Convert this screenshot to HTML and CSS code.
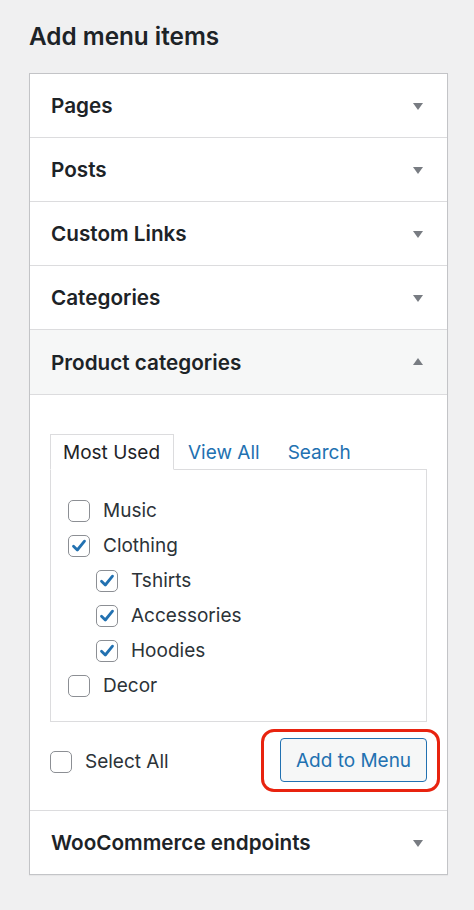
FILE: index.html
```html
<!DOCTYPE html>
<html>
<head>
<meta charset="utf-8">
<link rel="stylesheet" href="styles.css">
</head>
<body>
<div class="wrap">
  <h2 class="title">Add menu items</h2>
  <div class="panel">
    <div class="sec-head"><span>Pages</span><span class="arrow down"></span></div>
    <div class="sec-head"><span>Posts</span><span class="arrow down"></span></div>
    <div class="sec-head"><span>Custom Links</span><span class="arrow down"></span></div>
    <div class="sec-head"><span>Categories</span><span class="arrow down"></span></div>
    <div class="sec-head open"><span>Product categories</span><span class="arrow up"></span></div>
    <div class="sec-body">
      <div class="tabs">
        <span class="tab active">Most Used</span>
        <span class="tab link">View All</span>
        <span class="tab link">Search</span>
      </div>
      <div class="listbox">
        <label class="item"><span class="cb"></span>Music</label>
        <label class="item"><span class="cb on"><svg viewBox="0 0 20 20"><path d="M4.5 10.2 L8.3 14 L15.5 5.2" /></svg></span>Clothing</label>
        <label class="item child"><span class="cb on"><svg viewBox="0 0 20 20"><path d="M4.5 10.2 L8.3 14 L15.5 5.2" /></svg></span>Tshirts</label>
        <label class="item child"><span class="cb on"><svg viewBox="0 0 20 20"><path d="M4.5 10.2 L8.3 14 L15.5 5.2" /></svg></span>Accessories</label>
        <label class="item child"><span class="cb on"><svg viewBox="0 0 20 20"><path d="M4.5 10.2 L8.3 14 L15.5 5.2" /></svg></span>Hoodies</label>
        <label class="item"><span class="cb"></span>Decor</label>
      </div>
      <div class="actions">
        <label class="item selall"><span class="cb"></span>Select All</label>
        <span class="highlight"><button class="btn">Add to Menu</button></span>
      </div>
    </div>
    <div class="sec-head last"><span>WooCommerce endpoints</span><span class="arrow down"></span></div>
  </div>
</div>
</body>
</html>
```

FILE: styles.css
```css
html, body {
  margin: 0;
  padding: 0;
}
body {
  background: #f0f0f1;
  font-family: Inter, "Noto Sans", "Liberation Sans", sans-serif;
  color: #1d2327;
  width: 474px;
  height: 910px;
  overflow: hidden;
}
.wrap {
  padding: 20px 26px 0 29px;
}
.title {
  margin: 0;
  font-size: 24.3px;
  font-weight: 600;
  line-height: 32px;
  height: 32px;
  letter-spacing: 0;
}
.panel {
  margin-top: 21px;
  width: 417px;
  background: #fff;
  border: 1px solid #c3c4c7;
  box-shadow: 0 1px 1px rgba(0,0,0,0.04);
}
.sec-head {
  height: 63px;
  border-bottom: 1px solid #dcdcde;
  display: flex;
  align-items: center;
  justify-content: space-between;
  padding: 0 24px 0 21px;
  font-size: 20.7px;
  font-weight: 600;
}
.sec-head.open {
  background: #f6f7f7;
  height: 64px;
}
.sec-head.last {
  border-bottom: none;
}
.arrow {
  width: 0;
  height: 0;
  border-left: 5.5px solid transparent;
  border-right: 5.5px solid transparent;
}
.arrow.down {
  border-top: 7px solid #787c82;
  margin-top: 2px;
}
.arrow.up {
  border-bottom: 7px solid #787c82;
  margin-top: -2px;
}
.sec-body {
  padding: 39px 20px 0 20px;
  border-bottom: 1px solid #dcdcde;
}
.tabs {
  display: flex;
  height: 36px;
  align-items: stretch;
  position: relative;
  z-index: 1;
  margin-bottom: -1px;
}
.tab {
  font-size: 19px;
  display: flex;
  align-items: center;
  padding: 0 12px;
  line-height: 1;
}
.tab.active {
  border: 1px solid #dcdcde;
  border-bottom-color: #fff;
  background: #fff;
  padding: 0 12px;
  width: 98px;
}
.tab.link {
  color: #2271b1;
  padding: 0 14px;
}
.listbox {
  border: 1px solid #dcdcde;
  height: 253px;
  padding: 23px 0 0 17px;
  box-sizing: border-box;
  width: 377px;
}
.item {
  display: flex;
  align-items: center;
  height: 35px;
  font-size: 19px;
  color: #2c3338;
}
.item.child {
  padding-left: 28px;
}
.cb {
  width: 20px;
  height: 20px;
  border: 1.5px solid #8c8f94;
  border-radius: 5px;
  background: #fff;
  margin-right: 13px;
  display: flex;
  align-items: center;
  justify-content: center;
  flex: none;
}
.cb svg {
  width: 20px;
  height: 20px;
}
.cb svg path {
  fill: none;
  stroke: #2271b1;
  stroke-width: 2.8;
  stroke-linecap: round;
  stroke-linejoin: round;
}
.actions {
  display: flex;
  justify-content: space-between;
  align-items: flex-start;
  height: 88px;
  padding-top: 0;
}
.actions .selall {
  margin-top: 22px;
  color: #2c3338;
}
.highlight {
  border: 3px solid #e8230f;
  border-radius: 13px;
  padding: 6px 10px 7px 16px;
  margin-right: -13px;
  margin-top: 7px;
  display: flex;
}
.btn {
  font-family: inherit;
  font-size: 19px;
  color: #2271b1;
  background: #f6f7f7;
  border: 1px solid #2271b1;
  border-radius: 4px;
  height: 44px;
  width: 147px;
  padding: 0;
  cursor: pointer;
}
```
